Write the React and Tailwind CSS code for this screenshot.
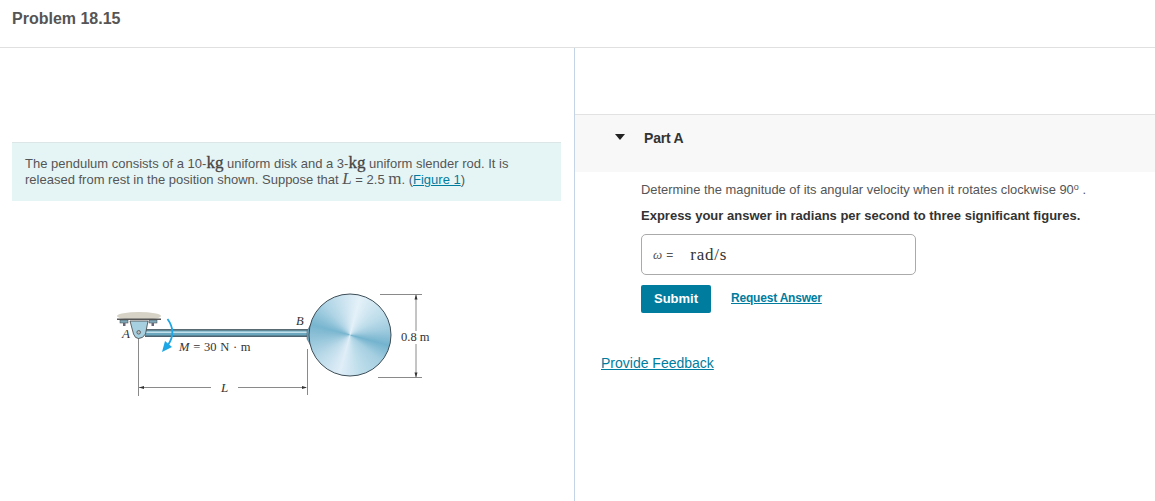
import React from 'react'

function Figure() {
  return (
    <svg className="block ml-[88px] mt-[79px]" width="360" height="120" viewBox="100 280 360 120" fontFamily="'Liberation Serif', serif" fill="#333">
      {/* dimension lines */}
      <g stroke="#8a8a8a" strokeWidth="1" fill="none">
        <path d="M138.5 338V396M307.5 349V395M139 387.5H211M238 387.5H306" />
        <path d="M380 294.5H422M378 377.5H422M416 295V331M416 344V377" />
      </g>
      <g fill="#333">
        <path d="M139 387.5l5-1.5v3zM307 387.5l-5-1.5v3zM416 294.5l-1.5 5h3zM416 377.5l-1.5-5h3z" />
      </g>
      {/* support */}
      <ellipse cx="139" cy="316" rx="22" ry="4" fill="#d6d2c6" />
      <rect x="117" y="318.5" width="44" height="1.5" fill="#555" />
      <rect x="120" y="320" width="8" height="3" fill="#7fa9bb" stroke="#444" strokeWidth="0.5" />
      <rect x="149" y="320" width="8" height="3" fill="#7fa9bb" stroke="#444" strokeWidth="0.5" />
      <rect x="123" y="323" width="2.5" height="3" fill="#667" />
      <rect x="151.5" y="323" width="2.5" height="3" fill="#667" />
      {/* rod */}
      <rect x="145" y="329.5" width="165" height="7" fill="#6ba8bf" />
      <rect x="145" y="329" width="165" height="1.5" fill="#5a6a72" />
      <rect x="145" y="331.5" width="165" height="1.5" fill="#c3e0ea" />
      <rect x="145" y="335.5" width="165" height="1.5" fill="#4b6370" />
      <path d="M130 321H148L145.5 334Q143 338.5 138.5 338.5Q135 338.5 133.5 334Z" fill="#a6cfe0" stroke="#444" strokeWidth="0.8" />
      <circle cx="138.7" cy="332.3" r="1.8" fill="#bbb" stroke="#444" strokeWidth="0.7" />
      {/* disk */}
      <path d="M307 331L311 324V346L307 339Z" fill="#6fa9c0" stroke="#556" strokeWidth="0.5" />
      <foreignObject x="309" y="294" width="82" height="82">
        <div className="w-[82px] h-[82px] rounded-full bg-[conic-gradient(from_15deg,#e4f1f9_0deg,#bcdcea_45deg,#a3cde0_65deg,#74b3ce_90deg,#a5cfe1_115deg,#bfdeeb_150deg,#e0eef8_180deg,#b9d9e8_220deg,#78b5cf_270deg,#aed4e5_305deg,#cde4f0_335deg,#e4f1f9_360deg)]" />
      </foreignObject>
      <circle cx="350" cy="335" r="41" fill="none" stroke="#3d4d57" strokeWidth="1" />
      {/* moment arrow */}
      <path d="M167.5 319Q177 332 168 345" fill="none" stroke="#1ea7e6" strokeWidth="1.8" />
      <path d="M162 352L172 347L165 341Z" fill="#1ea7e6" />
      <text x="122" y="338" fontSize="13" fontStyle="italic">A</text>
      <text x="296" y="325" fontSize="12.5" fontStyle="italic">B</text>
      <text x="179" y="351" fontSize="12.5" wordSpacing="0.6"><tspan fontStyle="italic">M</tspan> = 30 N · m</text>
      <text x="401" y="341" fontSize="12.5">0.8 m</text>
      <text x="221" y="392" fontSize="13" fontStyle="italic">L</text>
    </svg>
  )
}

function Kg() {
  return <span className="font-['Liberation_Serif',serif] text-[17px] text-[#444] [-webkit-text-stroke:0.3px_#444]">kg</span>
}

export default function App() {
  return (
    <div className="w-[1155px] h-[501px] overflow-hidden bg-white font-['Liberation_Sans',sans-serif] text-[#333]">
      <div className="h-[48px] border-b border-[#e0e0e0] pl-3 pt-[9px] text-[16px] leading-[20px] font-bold text-[#555]">
        Problem 18.15
      </div>
      <div className="flex h-[453px]">
        <div className="w-[575px] border-r border-[#c3d4e6] pt-[94px] pl-3 pr-[13px]">
          <div className="h-[59px] bg-[#e5f5f6] border-t border-[#dde6e6] pl-[13px] pt-[12px] text-[13px] leading-[16px] text-[#555]">
            <p className="h-[16px]">
              The pendulum consists of a 10-<Kg /> uniform disk and a 3-<Kg /> uniform slender rod. It is
            </p>
            <p className="h-[16px]">
              released from rest in the position shown. Suppose that <i className="font-['Liberation_Serif',serif] text-[17px]">L</i> = 2.5 <span className="font-['Liberation_Serif',serif] text-[17px]">m</span>. (<a className="text-[#007c9e] underline">Figure 1</a>)
            </p>
          </div>
          <Figure />
        </div>
        <div className="flex-1 pt-[66px]">
          <div className="h-[58px] bg-[#f8f8f8] border-t border-[#e2e2e2] flex items-start pt-[14px] pl-[40px]">
            <span className="w-0 h-0 mt-[5px] border-l-[5px] border-r-[5px] border-t-[6px] border-l-transparent border-r-transparent border-t-[#222]" />
            <span className="ml-[19px] text-[14px] leading-[18px] font-bold text-[#333] tracking-[-0.2px]">Part A</span>
          </div>
          <div className="pl-[66px] pt-[10px]">
            <p className="h-[16px] text-[12.9px] leading-[16px] text-[#555] whitespace-nowrap">
              Determine the magnitude of its angular velocity when it rotates clockwise 90<sup className="text-[9px]">o</sup> .
            </p>
            <p className="mt-[10px] text-[13px] leading-[16px] font-bold text-[#333]">
              Express your answer in radians per second to three significant figures.
            </p>
            <div className="mt-[10px] w-[275px] h-[41px] border border-[#aaa] rounded-[5px] flex items-center pl-[11px] font-['Liberation_Serif',serif]">
              <i className="text-[13px] text-[#555]">ω</i>
              <span className="ml-[4px] text-[12px] font-['Liberation_Sans',sans-serif] text-[#555]">=</span>
              <span className="ml-[17px] text-[17px] text-[#333] tracking-[0.8px]">rad/s</span>
            </div>
            <div className="mt-[10px] flex items-start">
              <button className="w-[70px] h-[28px] bg-[#007c9e] rounded-[2px] text-white text-[13px] font-bold leading-[28px]">Submit</button>
              <a className="ml-[20px] mt-[5px] text-[12px] leading-[16px] font-bold text-[#007c9e] underline tracking-[-0.2px]">Request Answer</a>
            </div>
          </div>
          <a className="block ml-[26px] mt-[41px] text-[14px] leading-[18px] text-[#007c9e] underline">Provide Feedback</a>
        </div>
      </div>
    </div>
  )
}
